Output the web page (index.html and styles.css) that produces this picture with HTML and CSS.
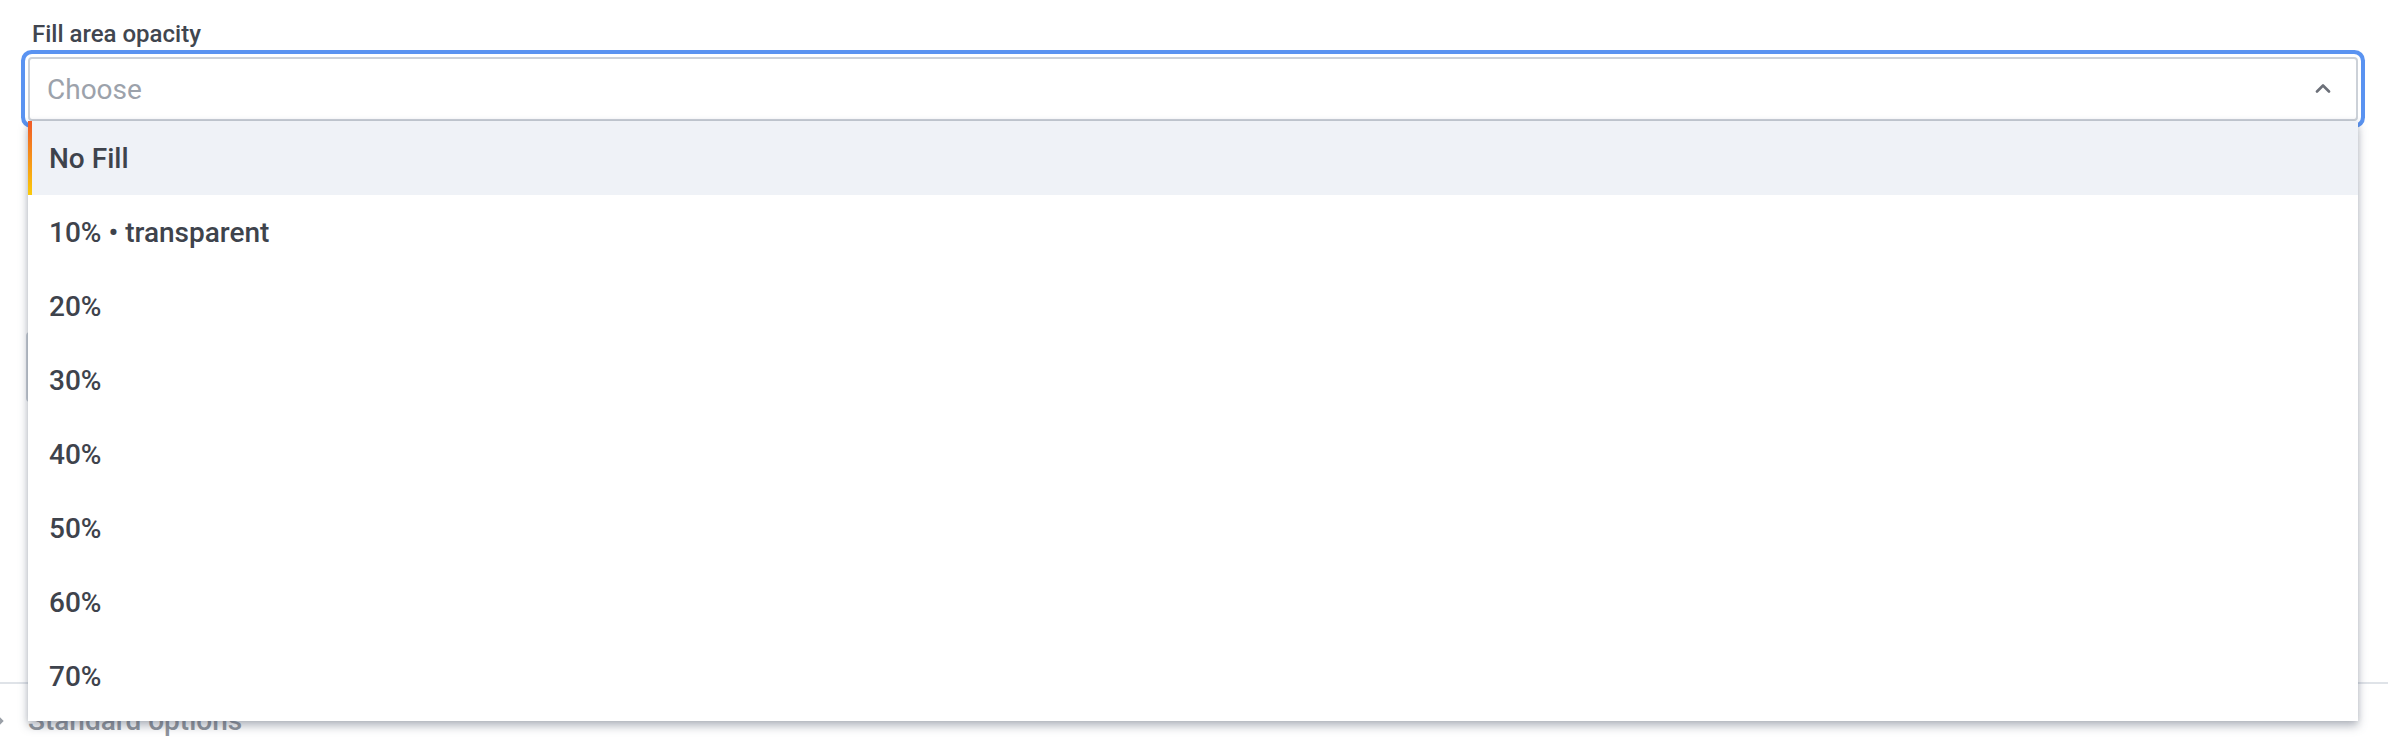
FILE: index.html
```html
<!DOCTYPE html>
<html>
<head>
<meta charset="utf-8">
<link rel="stylesheet" href="styles.css">
</head>
<body>
<div class="page">
  <label class="field-label">Fill area opacity</label>
  <div class="select">
    <div class="select-input">
      <span class="placeholder">Choose</span>
      <svg class="chevron" width="16" height="10" viewBox="0 0 16 10"><path d="M2 8.5 L8 2.5 L14 8.5" fill="none" stroke="#6c7079" stroke-width="2.6" stroke-linecap="round" stroke-linejoin="round"/></svg>
    </div>
    <div class="menu">
      <div class="option selected">No Fill</div>
      <div class="option">10% • transparent</div>
      <div class="option">20%</div>
      <div class="option">30%</div>
      <div class="option">40%</div>
      <div class="option">50%</div>
      <div class="option">60%</div>
      <div class="option">70%</div>
    </div>
  </div>
  <div class="bg-field"></div>
  <div class="divider"></div>
  <div class="section-head">
    <svg class="section-icon" width="16" height="16" viewBox="0 0 16 16"><path d="M-4 2 L2 8 L-4 14" fill="none" stroke="#9a9fa7" stroke-width="2.4"/></svg>
    <span class="section-title">Standard options</span>
  </div>
</div>
</body>
</html>
```

FILE: styles.css
```css
html, body {
  margin: 0;
  padding: 0;
  background: #ffffff;
  overflow: hidden;
}

body {
  font-family: Roboto, "Liberation Sans", sans-serif;
  width: 2388px;
  height: 746px;
}

.page {
  padding: 19px 30px 0 28px;
  position: relative;
}

.field-label {
  display: block;
  font-size: 24px;
  line-height: 30px;
  font-weight: 500;
  color: #41464f;
  padding-left: 4px;
  margin-bottom: 8px;
}

.select {
  position: relative;
  z-index: 2;
}

.select-input {
  height: 64px;
  box-sizing: border-box;
  border: 2px solid #ccd1d8;
  border-radius: 4px;
  box-shadow: 0 0 0 3px #ffffff, 0 0 0 7px #5a93f1;
  display: flex;
  align-items: center;
  padding: 0 25px 0 17px;
  background: #ffffff;
}

.placeholder {
  flex: 1;
  font-size: 28px;
  color: #9ca2ab;
}

.chevron {
  display: block;
  margin-top: -3px;
}

.menu {
  position: absolute;
  top: 100%;
  left: 0;
  right: 0;
  background: #ffffff;
  padding-bottom: 8px;
  box-shadow: 0 5px 9px rgba(70, 80, 100, 0.4), 0 0 5px rgba(70, 80, 100, 0.12);
}

.option {
  height: 74px;
  display: flex;
  align-items: center;
  padding-left: 21px;
  font-size: 28px;
  font-weight: 500;
  color: #3e434c;
  position: relative;
}

.option.selected {
  background: #eff2f7;
}

.option.selected::before {
  content: "";
  position: absolute;
  left: 0;
  top: 0;
  bottom: 0;
  width: 4px;
  background: linear-gradient(to bottom, #f05a28, #fbca0a);
}

.bg-field {
  margin-top: 211px;
  margin-left: -2px;
  width: 400px;
  height: 70px;
  box-sizing: border-box;
  border: 2px solid #c9ced5;
  border-radius: 4px;
}

.divider {
  margin: 280px -30px 0 -28px;
  height: 2px;
  background: #dfe3e8;
}

.section-head {
  display: flex;
  align-items: center;
  margin-top: 20px;
  margin-left: -28px;
}

.section-icon {
  display: block;
  margin-right: 12px;
}

.section-title {
  font-size: 28px;
  line-height: 34px;
  font-weight: 500;
  color: #8f949c;
}
```
